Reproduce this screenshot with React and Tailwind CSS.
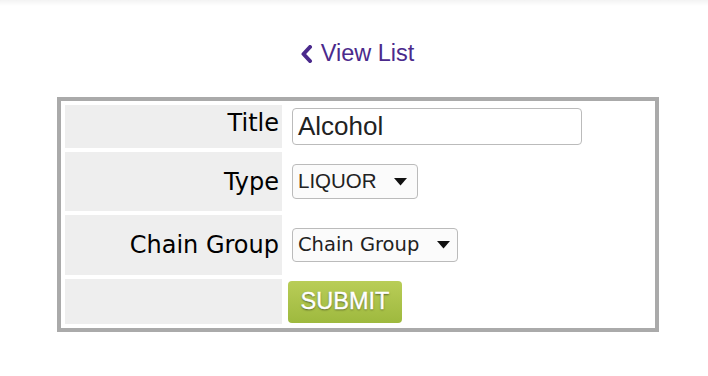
import React from "react";

function Caret() {
  return (
    <svg width="13" height="8" viewBox="0 0 13 8" className="shrink-0">
      <path d="M0 0 H13 L6.5 7.5 Z" fill="#111" />
    </svg>
  );
}

export default function App() {
  const label = "flex items-center justify-end pr-[3px] bg-[#eeeeee] text-[24px] text-black font-['DejaVu_Sans',Verdana,sans-serif]";
  const cell = "flex items-center pl-[6px]";
  return (
    <div className="w-[708px] h-[376px] bg-white relative font-['Liberation_Sans',Arial,sans-serif]">
      <div className="h-[6px] bg-gradient-to-b from-[#f3f3f3] to-white" />
      <div className="ml-[57px] w-[602px] flex flex-col">
        <div className="flex justify-center items-center h-[26px] mt-[35px] gap-[8px] text-[#4b2a8c] text-[23.5px] pr-[2px]">
          <svg width="13" height="18" viewBox="0 0 13 18">
            <path d="M10 2 L3.5 9 L10 16" fill="none" stroke="#4b2a8c" strokeWidth="4" strokeLinecap="round" strokeLinejoin="round" />
          </svg>
          <span>View List</span>
        </div>
        <div className="mt-[30px] border-4 border-[#aaaaaa] p-[4px] grid grid-cols-[217px_1fr] grid-rows-[43px_59px_60px_45px] gap-[4px]">
          <div className={label + " pb-[8px]"}>Title</div>
          <div className={cell}>
            <div className="w-[290px] h-[37px] border border-[#bbbbbb] rounded-[4px] flex items-center pl-[5px] text-[26px] text-[#222]">
              Alcohol
            </div>
          </div>
          <div className={label}>Type</div>
          <div className={cell}>
            <div className="w-[126px] h-[35px] border border-[#bbbbbb] rounded-[4px] bg-[#fbfbfb] flex items-center justify-between pl-[5px] pr-[10px] text-[20.5px] text-[#222]">
              <span>LIQUOR</span>
              <Caret />
            </div>
          </div>
          <div className={label}>Chain Group</div>
          <div className={cell}>
            <div className="w-[166px] h-[34px] border border-[#bbbbbb] rounded-[4px] bg-[#fbfbfb] flex items-center justify-between pl-[5px] pr-[7px] text-[19.5px] text-[#222] font-['DejaVu_Sans',Verdana,sans-serif]">
              <span>Chain Group</span>
              <Caret />
            </div>
          </div>
          <div className="bg-[#eeeeee]" />
          <div className="flex items-center pl-[2px]">
            <div className="w-[114px] h-[42px] rounded-[4px] bg-gradient-to-b from-[#b9cd57] to-[#9eb93e] flex items-center justify-center text-white text-[23.5px] [text-shadow:0_1px_2px_rgba(0,0,0,0.55)] [-webkit-text-stroke:0.4px_white]">
              SUBMIT
            </div>
          </div>
        </div>
      </div>
    </div>
  );
}
